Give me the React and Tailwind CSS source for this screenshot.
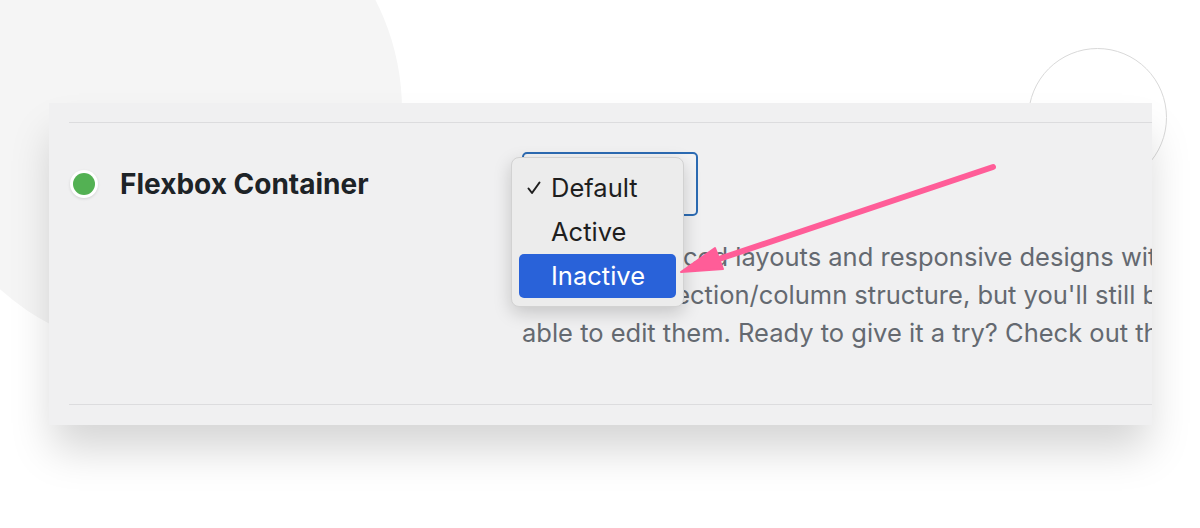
import React from 'react';

const options = ['Default', 'Active', 'Inactive'];

const StatusDot = () => (
  <span className="h-[28px] w-[28px] rounded-full bg-white shadow-[0_1px_3px_rgba(0,0,0,0.12)] flex items-center justify-center shrink-0">
    <span className="h-[22px] w-[22px] rounded-full bg-[#53b153]" />
  </span>
);

const Check = () => (
  <svg width="14" height="14" viewBox="0 0 14 14" fill="none">
    <polyline points="1.5,7.5 5,12 12.5,1.5" stroke="#1e1e1e" strokeWidth="2" strokeLinecap="round" strokeLinejoin="round" />
  </svg>
);

const SelectMenu = () => (
  <div className="absolute left-[-11px] top-[5px] w-[173px] rounded-[8px] bg-[#ececec] border border-[#d2d2d2] shadow-[0_6px_18px_rgba(0,0,0,0.18)] px-[7px] py-[8px]">
    {options.map((opt) => {
      const selected = opt === 'Inactive';
      return (
        <div
          key={opt}
          className={
            selected
              ? 'h-[44px] flex items-center pl-[8px] rounded-[5px] bg-[#2962d9] text-white'
              : 'h-[44px] flex items-center pl-[8px] rounded-[5px] text-[#1e1e1e]'
          }
        >
          <span className="w-[24px] flex items-center">{opt === 'Default' && <Check />}</span>
          <span className="text-[25.5px] leading-none">{opt}</span>
        </div>
      );
    })}
  </div>
);

export default function App() {
  return (
    <div className="relative w-[1200px] h-[528px] overflow-hidden bg-white font-['Inter',sans-serif]">
      <div className="absolute left-[-80px] top-[-131px] w-[482px] h-[482px] rounded-full bg-[#f5f5f5]" />
      <div className="absolute left-[1028px] top-[48px] w-[139px] h-[139px] rounded-full border border-[#d9d9d9]" />

      <div className="relative pl-[49px] pt-[103px]">
        <div className="relative w-[1103px] h-[322px] overflow-hidden bg-[#f0f0f1] pl-[20px] pt-[19px] shadow-[0_28px_40px_-4px_rgba(0,0,0,0.17)]">
          <div className="border-t border-[#dcdcde]">
            <div className="flex pt-[29px]">
              <div className="w-[453px] shrink-0 h-[64px] flex items-center gap-[22px] pl-[1px]">
                <StatusDot />
                <h3 className="text-[28px] font-bold text-[#1d2327] whitespace-nowrap">Flexbox Container</h3>
              </div>
              <div className="flex-1 min-w-0">
                <div className="relative w-[176px] h-[64px]">
                  <div className="h-full w-full rounded-[5px] border-2 border-[#2c6bb3] bg-[#f3f3f4]" />
                  <SelectMenu />
                </div>
                <div className="mt-[22px] text-[25.5px] leading-[38px] text-[#646970] whitespace-nowrap">
                  <div>Create advanced layouts and responsive designs with the new Flexbox Container element.</div>
                  <div>the current section/column structure, but you'll still be</div>
                  <div>able to edit them. Ready to give it a try? Check out the Flexbox playground.</div>
                </div>
              </div>
            </div>
          </div>
          <div className="mt-[52px] border-t border-[#dcdcde]" />
        </div>
      </div>

      <svg className="absolute inset-0 pointer-events-none" width="1200" height="528" viewBox="0 0 1200 528">
        <line x1="993" y1="167" x2="716" y2="260" stroke="#ff5d98" strokeWidth="6" strokeLinecap="round" />
        <polygon points="681,272 715,248 723,269" fill="#ff5d98" stroke="#ff5d98" strokeWidth="2" strokeLinejoin="round" />
      </svg>
    </div>
  );
}
